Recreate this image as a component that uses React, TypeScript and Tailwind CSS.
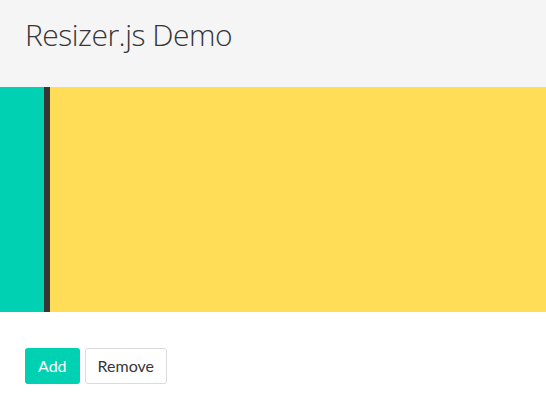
export default function App() {
  return (
    <div className="w-[546px] h-[408px] bg-white" style={{ fontFamily: '"Open Sans", sans-serif' }}>
      <div className="h-[87px] bg-[#f5f5f5] pl-[25px] pt-[15px]">
        <h1 className="text-[30px] font-light text-[#363636] leading-[40px] tracking-[-0.5px]">Resizer.js Demo</h1>
      </div>
      <div className="flex h-[225px]">
        <div className="w-[44px] bg-[#00d1b2]" />
        <div className="w-[6px] bg-[#363636]" />
        <div className="flex-1 bg-[#ffdd57]" />
      </div>
      <div className="flex gap-[5px] pl-[25px] pt-[36px]">
        <button className="h-[36px] px-[12px] rounded-[3px] border border-transparent bg-[#00d1b2] text-white text-[16px]" style={{ fontFamily: 'Lato, sans-serif' }}>Add</button>
        <button className="h-[36px] px-[12px] rounded-[3px] border border-[#dbdbdb] bg-white text-[#363636] text-[16px]" style={{ fontFamily: 'Lato, sans-serif' }}>Remove</button>
      </div>
    </div>
  );
}
